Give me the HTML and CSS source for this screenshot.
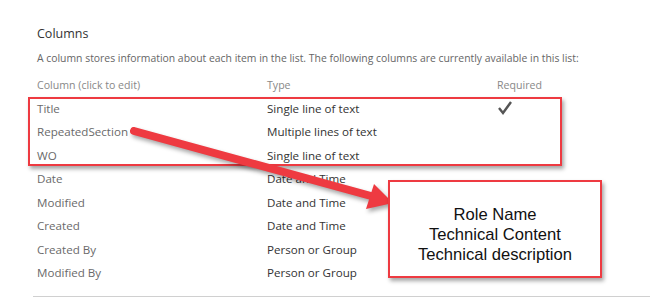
FILE: index.html
```html
<!DOCTYPE html>
<html>
  <head>
    <title>Columns</title>
    <link rel="stylesheet" href="styles.css">
  </head>
  <body>
    <div class="page">
      <h2 class="section-title">Columns</h2>
      <p class="section-desc">A column stores information about each item in the list. The following columns are currently available in this list:</p>

      <div class="columns-table">
        <div class="row head">
          <span>Column (click to edit)</span>
          <span>Type</span>
          <span>Required</span>
        </div>
        <div class="row">
          <span class="name">Title</span>
          <span class="type">Single line of text</span>
          <span class="req">
            <svg width="16" height="14" viewBox="0 0 16 14"><polyline points="2,7 6,12 14,1" fill="none" stroke="#555" stroke-width="2.4"/></svg>
          </span>
        </div>
        <div class="row">
          <span class="name">RepeatedSection</span>
          <span class="type">Multiple lines of text</span>
          <span class="req"></span>
        </div>
        <div class="row">
          <span class="name">WO</span>
          <span class="type">Single line of text</span>
          <span class="req"></span>
        </div>
        <div class="row">
          <span class="name">Date</span>
          <span class="type">Date and Time</span>
          <span class="req"></span>
        </div>
        <div class="row">
          <span class="name">Modified</span>
          <span class="type">Date and Time</span>
          <span class="req"></span>
        </div>
        <div class="row">
          <span class="name">Created</span>
          <span class="type">Date and Time</span>
          <span class="req"></span>
        </div>
        <div class="row">
          <span class="name">Created By</span>
          <span class="type">Person or Group</span>
          <span class="req"></span>
        </div>
        <div class="row">
          <span class="name">Modified By</span>
          <span class="type">Person or Group</span>
          <span class="req"></span>
        </div>
      </div>
      <div class="divider"></div>
    </div>

    <!-- annotations drawn over the screenshot -->
    <div class="mark-box"></div>
    <svg class="arrow" width="650" height="299" viewBox="0 0 650 299">
      <line x1="134" y1="131" x2="371" y2="196" stroke="#ee3a41" stroke-width="8" stroke-linecap="round"/>
      <polygon points="393,203 366,209 374,184" fill="#ee3a41"/>
    </svg>
    <div class="callout">
      <div>Role Name</div>
      <div>Technical Content</div>
      <div>Technical description</div>
    </div>
  </body>
</html>
```

FILE: styles.css
```css
body {
  margin: 0;
  background: #fff;
  font-family: "Open Sans", "Noto Sans", sans-serif;
  color: #444;
  width: 650px;
  height: 299px;
  overflow: hidden;
  position: relative;
}
.page {
  padding: 25px 0 0 37px;
}
.section-title {
  margin: 0;
  font-size: 12.5px;
  font-weight: normal;
  line-height: 18px;
  color: #333;
}
.section-desc {
  margin: 7px 0 0;
  font-size: 10.4px;
  line-height: 16px;
  color: #666;
  white-space: nowrap;
}
.columns-table {
  margin-top: 7px;
}
.row {
  display: grid;
  grid-template-columns: 230px 230px 80px;
  height: 23.5px;
  align-items: center;
  font-size: 11.6px;
}
.row.head {
  font-size: 10.6px;
  color: #888;
}
.name {
  color: #6a6a6a;
}
.type {
  color: #333;
}
.req svg {
  display: block;
}
.divider {
  margin-top: 11px;
  margin-left: -4px;
  border-top: 1px solid #d0d0d0;
}
.mark-box {
  position: absolute;
  left: 28px;
  top: 97px;
  width: 530px;
  height: 65px;
  border: 2px solid #ee3a41;
  box-shadow: 2px 3px 4px rgba(0, 0, 0, 0.35);
}
.arrow {
  position: absolute;
  left: 0;
  top: 0;
  pointer-events: none;
  filter: drop-shadow(2px 3px 2px rgba(0, 0, 0, 0.35));
}
.callout {
  position: absolute;
  left: 388px;
  top: 180px;
  width: 210px;
  height: 71px;
  padding-top: 23px;
  border: 2px solid #ee3a41;
  background: #fff;
  box-shadow: 2px 3px 4px rgba(0, 0, 0, 0.35);
  font-family: "Liberation Sans", Arial, sans-serif;
  font-size: 16.6px;
  line-height: 20px;
  color: #111;
  text-align: center;
}
```
